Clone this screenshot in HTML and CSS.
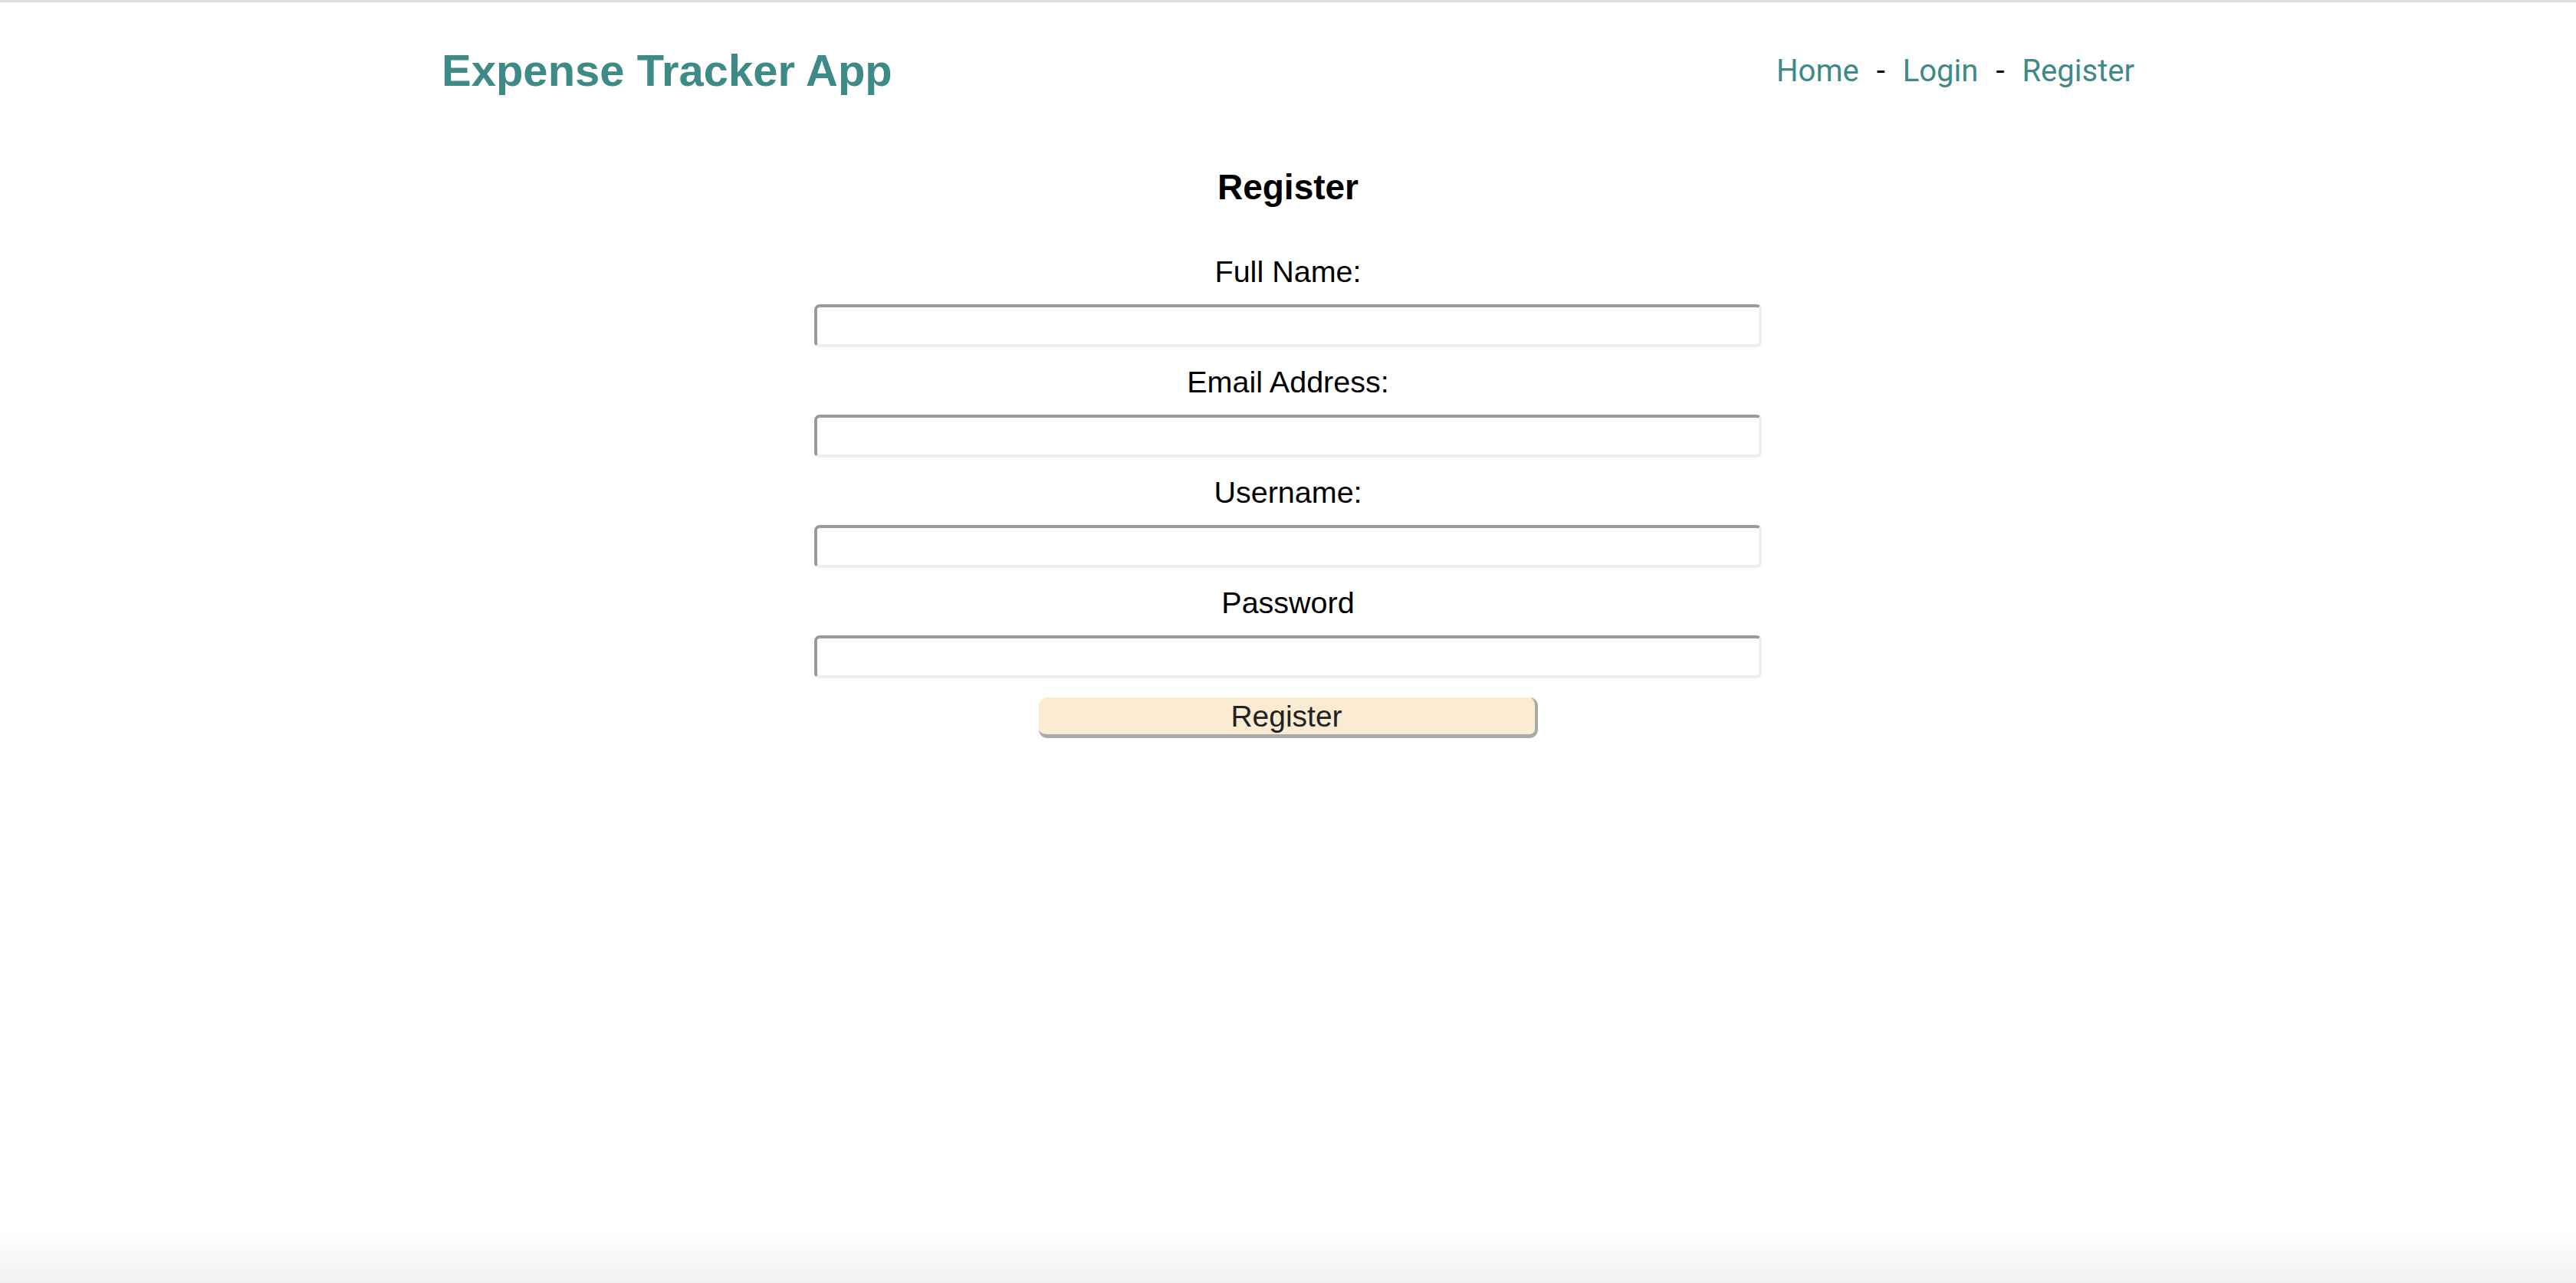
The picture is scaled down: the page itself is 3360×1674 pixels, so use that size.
FILE: index.html
```html
<!DOCTYPE html>
<html lang="en">
<head>
<meta charset="utf-8">
<title>Expense Tracker App - Register</title>
<link rel="stylesheet" href="styles.css">
</head>
<body>
<header class="site-header">
  <h1 class="brand">Expense Tracker App</h1>
  <nav class="nav">
    <a href="#" class="nav-link">Home</a>
    <span class="nav-sep">-</span>
    <a href="#" class="nav-link">Login</a>
    <span class="nav-sep">-</span>
    <a href="#" class="nav-link">Register</a>
  </nav>
</header>
<main class="page">
  <h2 class="page-title">Register</h2>
  <form class="form">
    <label class="field-label" for="fullname">Full Name:</label>
    <input class="field-input" type="text" id="fullname">
    <label class="field-label" for="email">Email Address:</label>
    <input class="field-input" type="email" id="email">
    <label class="field-label" for="username">Username:</label>
    <input class="field-input" type="text" id="username">
    <label class="field-label" for="password">Password</label>
    <input class="field-input" type="password" id="password">
    <button class="submit-btn" type="button">Register</button>
  </form>
</main>
</body>
</html>
```

FILE: styles.css
```css
html {
  height: 100%;
  margin: 0;
}

body {
  margin: 0;
  min-height: 100%;
  box-sizing: border-box;
  border-top: 3px solid #dddce2;
  font-family: "Liberation Sans", Arial, sans-serif;
  color: #000;
  background: linear-gradient(to bottom, #ffffff calc(100% - 70px), #f1f1f1 100%);
}

.site-header {
  width: 2208px;
  margin: 0 auto;
  padding-top: 54px;
  display: flex;
  justify-content: space-between;
  align-items: center;
}

.brand {
  margin: 0;
  font-size: 58px;
  line-height: 70px;
  font-weight: 700;
  color: #3d8a87;
}

.nav {
  display: flex;
  align-items: center;
  font-family: Roboto, "Liberation Sans", sans-serif;
  font-size: 40px;
}

.nav-link {
  color: #3d8a87;
  text-decoration: none;
}

.nav-sep {
  color: #000;
  margin: 0 23px;
}

.page {
  display: flex;
  flex-direction: column;
  align-items: center;
  padding-top: 90px;
}

.page-title {
  margin: 0 0 61px;
  font-size: 46px;
  line-height: 54px;
  font-weight: 700;
}

.form {
  display: flex;
  flex-direction: column;
  align-items: center;
}

.field-label {
  font-size: 39.5px;
  line-height: 44px;
  margin-bottom: 21px;
}

.field-input {
  box-sizing: border-box;
  width: 1236px;
  height: 56px;
  margin: 0 0 23px;
  border: 4px solid;
  border-color: #9a9a9a #eeeeee #eeeeee #9a9a9a;
  border-radius: 7px;
  background: #fff;
  font-size: 30px;
  padding: 0 10px;
}

.submit-btn {
  box-sizing: border-box;
  width: 651px;
  height: 53px;
  margin-top: 2px;
  padding: 0;
  border-style: solid;
  border-width: 0 4px 5px 0;
  border-color: #fcebd3 #aaaaaa #aaaaaa #fcebd3;
  border-radius: 11px;
  background: #fcebd3;
  font-family: "Liberation Sans", Arial, sans-serif;
  font-size: 39px;
  line-height: 1;
  color: #222;
}
```
